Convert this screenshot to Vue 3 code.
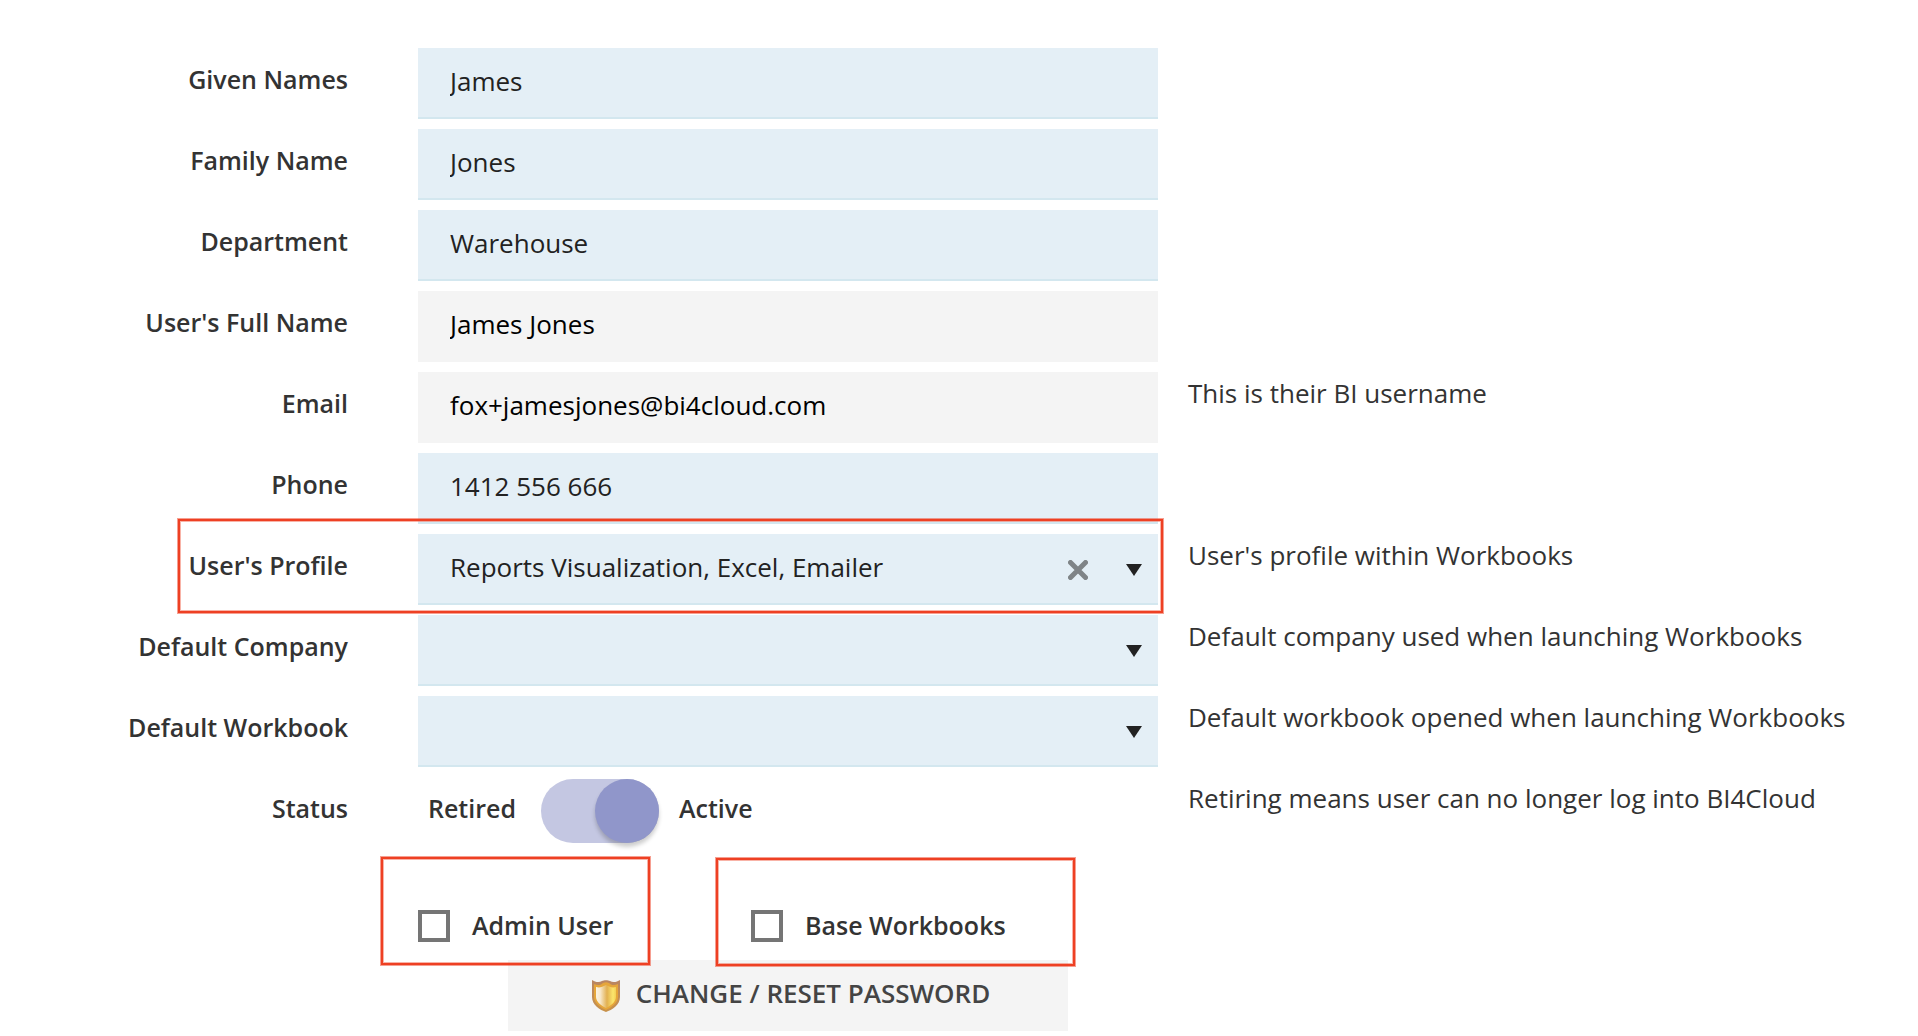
<script setup>
import { reactive } from 'vue'

const rows = [
  { id: 'given', label: 'Given Names', kind: 'text' },
  { id: 'family', label: 'Family Name', kind: 'text' },
  { id: 'department', label: 'Department', kind: 'text' },
  { id: 'full', label: "User's Full Name", kind: 'text', readonly: true },
  { id: 'email', label: 'Email', kind: 'text', readonly: true, note: 'This is their BI username' },
  { id: 'phone', label: 'Phone', kind: 'text' },
  {
    id: 'profile',
    label: "User's Profile",
    kind: 'select',
    options: ['Reports Visualization, Excel, Emailer'],
    clearable: true,
    marked: true,
    note: "User's profile within Workbooks",
  },
  { id: 'company', label: 'Default Company', kind: 'select', options: [], note: 'Default company used when launching Workbooks' },
  { id: 'workbook', label: 'Default Workbook', kind: 'select', options: [], note: 'Default workbook opened when launching Workbooks' },
]

const user = reactive({
  given: 'James',
  family: 'Jones',
  department: 'Warehouse',
  full: 'James Jones',
  email: 'fox+jamesjones@bi4cloud.com',
  phone: '1412 556 666',
  profile: 'Reports Visualization, Excel, Emailer',
  company: '',
  workbook: '',
  active: true,
  admin: false,
  base: false,
})
</script>

<template>
  <form class="user-form" @submit.prevent>
    <div v-for="row in rows" :key="row.id" class="row">
      <label class="label" :for="row.id">{{ row.label }}</label>
      <input
        v-if="row.kind === 'text'"
        :id="row.id"
        v-model="user[row.id]"
        class="field"
        :class="{ locked: row.readonly }"
        :readonly="row.readonly"
        type="text"
      />
      <div v-else class="picker">
        <select :id="row.id" v-model="user[row.id]" class="field">
          <option value=""></option>
          <option v-for="o in row.options" :key="o" :value="o">{{ o }}</option>
        </select>
        <button v-if="row.clearable" class="clear" type="button" aria-label="Clear profile" @click="user[row.id] = ''">
          <svg width="20" height="20" viewBox="0 0 20 20"><path d="M2.5 2.5L17.5 17.5M17.5 2.5L2.5 17.5" /></svg>
        </button>
        <svg class="arrow" width="16" height="12" viewBox="0 0 16 12"><path d="M0 0H16L8 12Z" /></svg>
      </div>
      <p v-if="row.note" class="note">{{ row.note }}</p>
      <span v-if="row.marked" class="mark mark-row"></span>
    </div>

    <div class="row">
      <label class="label" for="active">Status</label>
      <div class="status">
        <span>Retired</span>
        <input id="active" v-model="user.active" class="switch" type="checkbox" role="switch" />
        <span>Active</span>
      </div>
      <p class="note">Retiring means user can no longer log into BI4Cloud</p>
    </div>

    <div class="row">
      <div class="extras">
        <div class="options">
          <label class="option">
            <input v-model="user.admin" class="tick" type="checkbox" />
            <span>Admin User</span>
            <span class="mark mark-admin"></span>
          </label>
          <label class="option">
            <input v-model="user.base" class="tick" type="checkbox" />
            <span>Base Workbooks</span>
            <span class="mark mark-base"></span>
          </label>
        </div>
        <button class="reset" type="button">
          <svg width="28" height="32" viewBox="0 0 28 32">
            <defs>
              <linearGradient id="gold" x1="0" x2="1" y1="0" y2="0">
                <stop offset="0" stop-color="#fbf3e2" />
                <stop offset="0.2" stop-color="#f8ead0" />
                <stop offset="0.55" stop-color="#e2b050" />
                <stop offset="0.85" stop-color="#fce56c" />
                <stop offset="1" stop-color="#f3cf55" />
              </linearGradient>
              <linearGradient id="rim" x1="0" x2="0" y1="0" y2="1">
                <stop offset="0" stop-color="#b98562" />
                <stop offset="1" stop-color="#c8924a" />
              </linearGradient>
            </defs>
            <path d="M0 0C3 2 7 3 10 1C12 0 16 0 18 1C21 3 25 2 28 0V17C28 25 20 30 14 32C8 30 0 25 0 17Z" fill="url(#rim)" />
            <path d="M2 4C6 6 9 5 11 3C13 2 15 2 17 3C19 5 22 6 26 4V17C26 23 19 28 14 30C9 28 2 23 2 17Z" fill="#e6a63a" />
            <path d="M4 7C8 8 10 7 14 5C18 7 20 8 24 7V17C24 22 18 26 14 28C10 26 4 22 4 17Z" fill="url(#gold)" />
          </svg>
          <span>CHANGE / RESET PASSWORD</span>
        </button>
      </div>
    </div>
  </form>
</template>

<style>
body {
  background: #fff;
}
</style>

<style scoped>
.user-form {
  display: flex;
  flex-direction: column;
  gap: 10px;
  padding-top: 48px;
  color: #333;
  font-family: "Open Sans", "Noto Sans", sans-serif;
  font-size: 26px;
  line-height: 32px;
}
.row {
  position: relative;
  display: grid;
  grid-template-columns: 418fr 740fr 760fr;
  align-items: start;
}
.label {
  padding: 15px 70px 0 0;
  text-align: right;
  font-size: 25px;
  font-weight: 600;
}
.field {
  box-sizing: border-box;
  width: 100%;
  height: 71px;
  margin: 0;
  padding: 0 32px 4px;
  border: 0;
  border-bottom: 2px solid #d3e7ef;
  border-radius: 0;
  outline: 0;
  appearance: none;
  background: #e4eff6;
  color: #222;
  font: inherit;
}
.locked {
  border-color: #f4f4f4;
  background: #f4f4f4;
  color: #000;
}
.picker {
  position: relative;
}
.clear {
  position: absolute;
  top: 26px;
  right: 70px;
  padding: 0;
  border: 0;
  background: none;
  line-height: 0;
}
.clear path {
  stroke: #7f8487;
  stroke-width: 5;
  stroke-linecap: round;
}
.arrow {
  position: absolute;
  top: 30px;
  right: 16px;
  fill: #222;
  pointer-events: none;
}
.note {
  margin: 0;
  padding: 5px 0 0 30px;
}
.status {
  display: flex;
  padding: 2px 0 3px 10px;
  font-size: 25px;
  font-weight: 600;
  line-height: 58px;
}
.switch {
  width: 118px;
  height: 64px;
  margin: 0 20px 0 25px;
  border-radius: 32px;
  appearance: none;
  background: #c4c7e2;
}
.switch::before {
  content: "";
  display: block;
  width: 64px;
  height: 64px;
  border-radius: 50%;
  background: #9096ca;
  box-shadow: 0 4px 4px rgba(0, 0, 0, 0.2);
}
.switch:checked::before {
  margin-left: auto;
}
.extras {
  grid-column: 2;
  padding-top: 54px;
}
.options {
  display: grid;
  grid-template-columns: 333fr 407fr;
  font-size: 25px;
  font-weight: 600;
  line-height: 30px;
}
.option {
  position: relative;
  display: flex;
  gap: 22px;
}
.tick {
  box-sizing: border-box;
  width: 32px;
  height: 32px;
  margin: 0;
  border: 4px solid #757575;
  appearance: none;
  background: #fff;
}
.tick:checked {
  background: #757575;
}
.reset {
  display: flex;
  align-items: center;
  justify-content: center;
  gap: 16px;
  width: calc(100% - 180px);
  height: 71px;
  margin: 18px 90px 0;
  padding: 0 0 0 6px;
  border: 0;
  background: #f4f4f4;
  color: #444;
  font: inherit;
  font-weight: 600;
}
.reset span {
  padding-bottom: 6px;
}
.mark {
  position: absolute;
  z-index: 1;
  border: 2px solid #ee4023;
  box-shadow: 0 0 0 1px rgba(238, 64, 35, 0.5), inset 0 0 0 1px rgba(238, 64, 35, 0.4);
  pointer-events: none;
}
.mark-row {
  grid-column: 1 / 3;
  inset: -15px -5px -8px 178px;
}
.mark-admin {
  inset: -53px 101px -23px -37px;
}
.mark-base {
  inset: -52px 83px -24px -35px;
}
</style>
